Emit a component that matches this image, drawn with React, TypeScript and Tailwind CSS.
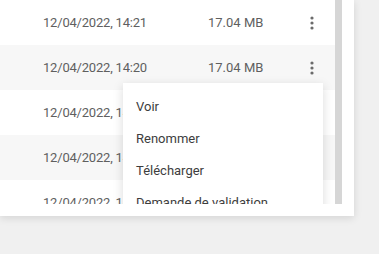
import React from "react";

const rows = [
  { date: "12/04/2022, 14:21", size: "17.04 MB" },
  { date: "12/04/2022, 14:20", size: "17.04 MB" },
  { date: "12/04/2022, 14:19", size: "17.04 MB" },
  { date: "12/04/2022, 14:18", size: "17.04 MB" },
  { date: "12/04/2022, 14:17", size: "17.04 MB" },
];

const menuItems = ["Voir", "Renommer", "Télécharger", "Demande de validation", "Supprimer"];

const Dots = () => (
  <svg width="4" height="14" viewBox="0 0 4 14" className="fill-[#6b6b6b]">
    <circle cx="2" cy="2" r="1.6" />
    <circle cx="2" cy="7" r="1.6" />
    <circle cx="2" cy="12" r="1.6" />
  </svg>
);

export default function App() {
  return (
    <div className="w-[379px] h-[254px] bg-[#f0f0f0] font-['Roboto',sans-serif] overflow-hidden">
      <div className="w-[354px] h-[216px] bg-white shadow-[0_2px_8px_rgba(0,0,0,0.12)] flex pr-3 pb-3">
        <div className="relative flex-1 h-[204px] overflow-hidden flex">
          {/* Liste des fichiers */}
          <div className="flex-1 flex flex-col">
            <div className="h-[1px] bg-[#f7f7f7]" />
            {rows.map((r, i) => (
              <div
                key={i}
                className={`shrink-0 h-[45px] flex items-center text-[13px] text-[#5f5f5f] ${
                  i % 2 === 1 ? "bg-[#f7f7f7]" : "bg-white"
                }`}
              >
                <span className="pl-[43px] w-[208px] tracking-[-0.2px]">{r.date}</span>
                <span className="w-[102px]">{r.size}</span>
                <span className="flex items-center">
                  <Dots />
                </span>
              </div>
            ))}
          </div>
          {/* Barre de défilement */}
          <div className="w-[7px] h-full bg-[#d6d6d6]" />

          {/* Menu contextuel */}
          <div className="absolute left-[123px] top-[83px] w-[200px] bg-white shadow-[0_3px_10px_rgba(0,0,0,0.15)] pt-[8px] pb-[6px]">
            {menuItems.map((m) => (
              <div key={m} className="h-[32px] flex items-center pl-[13px] text-[13px] text-[#3d3d3d]">
                {m}
              </div>
            ))}
          </div>
        </div>
      </div>
    </div>
  );
}
